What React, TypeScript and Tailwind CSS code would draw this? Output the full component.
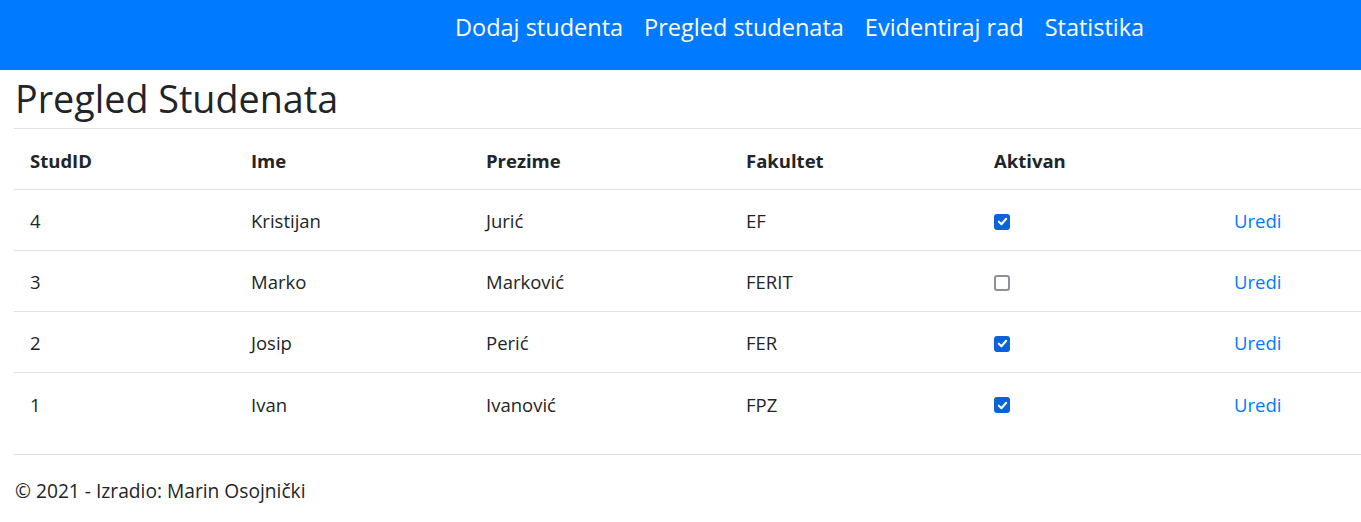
import React from "react";

const rows = [
  { id: 4, ime: "Kristijan", prezime: "Jurić", fak: "EF", akt: true },
  { id: 3, ime: "Marko", prezime: "Marković", fak: "FERIT", akt: false },
  { id: 2, ime: "Josip", prezime: "Perić", fak: "FER", akt: true },
  { id: 1, ime: "Ivan", prezime: "Ivanović", fak: "FPZ", akt: true },
];

const cols = "grid grid-cols-[221px_235px_260px_248px_240px_1fr]";

function Check({ on }: { on: boolean }) {
  if (on)
    return (
      <span className="inline-flex w-[16px] h-[16px] rounded-[3px] bg-[#0b62d9] items-center justify-center">
        <svg width="11" height="11" viewBox="0 0 12 12">
          <path d="M2 6.2 L4.8 9 L10 3" fill="none" stroke="#fff" strokeWidth="2.2" strokeLinecap="round" strokeLinejoin="round" />
        </svg>
      </span>
    );
  return <span className="inline-block w-[16px] h-[16px] rounded-[3px] border-2 border-[#8f8f9d] bg-white" />;
}

export default function App() {
  return (
    <div className="min-h-[522px] bg-white text-[#212529] font-['Open_Sans',sans-serif] overflow-hidden">
      <nav className="h-[70px] bg-[#007bff] flex items-start pt-[9px] pl-[455px] gap-[21px] text-white text-[23.5px] leading-[36px]">
        <span>Dodaj studenta</span>
        <span>Pregled studenata</span>
        <span>Evidentiraj rad</span>
        <span>Statistika</span>
      </nav>
      <div className="pl-[14px]">
        <h1 className="text-[37.7px] leading-[58px] pl-[1px]">Pregled Studenata</h1>
        <div className="w-[1400px] text-[18.5px]">
          <div className={`${cols} border-t border-[#dee2e6] border-b h-[62px] items-center font-bold pt-[4px]`}>
            <div className="pl-[16px]">StudID</div>
            <div className="pl-[16px]">Ime</div>
            <div className="pl-[16px]">Prezime</div>
            <div className="pl-[16px]">Fakultet</div>
            <div className="pl-[16px]">Aktivan</div>
            <div />
          </div>
          {rows.map((r, i) => (
            <div
              key={r.id}
              className={`${cols} h-[61px] items-center ${i < rows.length - 1 ? "border-b border-[#dee2e6]" : ""}`}
            >
              <div className="pl-[16px] pt-[2px]">{r.id}</div>
              <div className="pl-[16px] pt-[2px]">{r.ime}</div>
              <div className="pl-[16px] pt-[2px]">{r.prezime}</div>
              <div className="pl-[16px] pt-[2px]">{r.fak}</div>
              <div className="pl-[16px] pt-[3px] flex items-center">
                <Check on={r.akt} />
              </div>
              <div className="pl-[16px] pt-[2px] text-[#007bff]">Uredi</div>
            </div>
          ))}
          <div className="h-[20px]" />
          <div className="border-t border-[#dee2e6] pt-[22px] pl-[1px] text-[19.2px]">© 2021 - Izradio: Marin Osojnički</div>
        </div>
      </div>
    </div>
  );
}
